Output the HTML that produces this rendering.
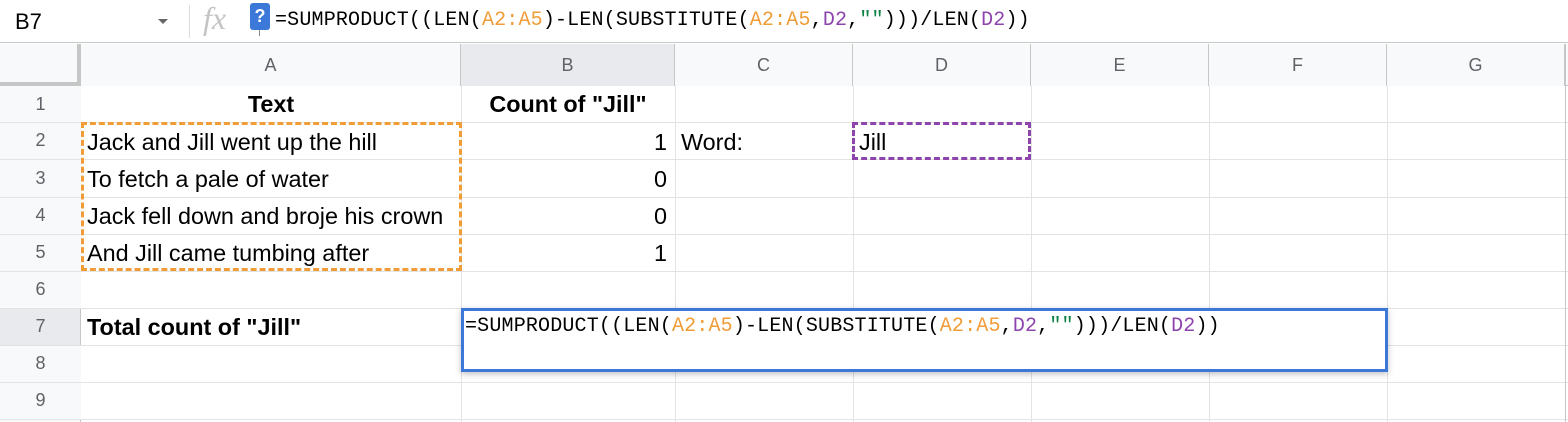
<!DOCTYPE html>
<html><head><meta charset="utf-8"><style>
*{margin:0;padding:0;box-sizing:border-box}
body{width:1568px;height:422px;overflow:hidden;background:#fff;font-family:"Liberation Sans",Arial,sans-serif;position:relative}
.a{position:absolute}
.hl{position:absolute;height:1px;background:#e2e3e3}
.vl{position:absolute;width:1px;background:#e2e3e3}
.ch{position:absolute;top:44px;height:42px;line-height:42px;text-align:center;color:#5f6368;font-size:18px;background:#f8f9fa;border-right:1px solid #c4c7c5}
.rh{position:absolute;left:0;width:81px;text-align:center;color:#5f6368;font-size:18px;background:#f8f9fa}
.c{position:absolute;font-size:23.4px;color:#000;white-space:nowrap}
.mono{font-family:"Liberation Mono",monospace;font-size:20px;letter-spacing:0px;white-space:nowrap;color:#000}
.o{color:#f09c37}.p{color:#8e44ad}.g{color:#0b8043}
</style></head><body>
<div class="a" style="left:0;top:0;width:1568px;height:43px;background:#fff;border-bottom:1px solid #c4c7c5"></div>
<div class="a" style="left:15px;top:9px;font-size:22px;color:#000">B7</div>
<div class="a" style="left:158px;top:19px;width:0;height:0;border-left:5px solid transparent;border-right:5px solid transparent;border-top:5px solid #666"></div>
<div class="a" style="left:189px;top:5px;width:1px;height:33px;background:#dadce0"></div>
<div class="a" style="left:203px;top:0px;font-family:'Liberation Serif',serif;font-style:italic;font-size:32px;color:#c4c4c4">fx</div>
<div class="a" style="left:250px;top:3px;width:20px;height:27px;background:#3c78d8;border-radius:3px;color:#fff;font-weight:bold;font-size:18px;text-align:center;line-height:27px">?</div>
<div class="a" style="left:259px;top:30px;width:1px;height:6px;background:#888"></div>
<div class="a mono" style="left:275px;top:9px;letter-spacing:0.17px">=SUMPRODUCT((LEN(<span class="o">A2:A5</span>)-LEN(SUBSTITUTE(<span class="o">A2:A5</span>,<span class="p">D2</span>,<span class="g">""</span>)))/LEN(<span class="p">D2</span>))</div>
<div class="a" style="left:0;top:44px;width:1568px;height:42px;background:#f8f9fa;border-bottom:1px solid #c4c7c5"></div>
<div class="a" style="left:0;top:44px;width:81px;height:42px;background:#f8f9fa;border-right:4px solid #c4c7c5;border-bottom:4px solid #c4c7c5"></div>
<div class="ch" style="left:81px;width:380px">A</div>
<div class="ch" style="left:461px;width:214px;background:#e8eaed">B</div>
<div class="ch" style="left:675px;width:178px">C</div>
<div class="ch" style="left:853px;width:178px">D</div>
<div class="ch" style="left:1031px;width:178px">E</div>
<div class="ch" style="left:1209px;width:178px">F</div>
<div class="ch" style="left:1387px;width:178px">G</div>
<div class="a" style="left:0;top:86px;width:81px;height:336px;background:#f8f9fa;border-right:1px solid #c4c7c5"></div>
<div class="a" style="left:0;top:308px;width:80px;height:37px;background:#e8eaed"></div>
<div class="rh" style="top:86px;height:36px;line-height:36px">1</div>
<div class="rh" style="top:122px;height:37px;line-height:37px">2</div>
<div class="rh" style="top:159px;height:38px;line-height:38px">3</div>
<div class="rh" style="top:197px;height:37px;line-height:37px">4</div>
<div class="rh" style="top:234px;height:37px;line-height:37px">5</div>
<div class="rh" style="top:271px;height:37px;line-height:37px">6</div>
<div class="rh" style="top:308px;height:37px;line-height:37px;background:transparent">7</div>
<div class="rh" style="top:345px;height:37px;line-height:37px">8</div>
<div class="rh" style="top:382px;height:37px;line-height:37px">9</div>
<div class="hl" style="left:0;width:1568px;top:122px"></div>
<div class="hl" style="left:0;width:1568px;top:159px"></div>
<div class="hl" style="left:0;width:1568px;top:197px"></div>
<div class="hl" style="left:0;width:1568px;top:234px"></div>
<div class="hl" style="left:0;width:1568px;top:271px"></div>
<div class="hl" style="left:0;width:1568px;top:308px"></div>
<div class="hl" style="left:0;width:1568px;top:345px"></div>
<div class="hl" style="left:0;width:1568px;top:382px"></div>
<div class="hl" style="left:0;width:1568px;top:419px"></div>
<div class="vl" style="left:461px;top:86px;height:336px"></div>
<div class="vl" style="left:675px;top:86px;height:336px"></div>
<div class="vl" style="left:853px;top:86px;height:336px"></div>
<div class="vl" style="left:1031px;top:86px;height:336px"></div>
<div class="vl" style="left:1209px;top:86px;height:336px"></div>
<div class="vl" style="left:1387px;top:86px;height:336px"></div>
<div class="vl" style="left:1565px;top:44px;height:378px;background:#c4c7c5"></div>
<div class="c" style="left:81px;width:380px;text-align:center;top:91px;font-weight:bold">Text</div>
<div class="c" style="left:461px;width:214px;text-align:center;top:91px;font-weight:bold">Count of "Jill"</div>
<div class="c" style="left:87px;top:129px">Jack and Jill went up the hill</div>
<div class="c" style="left:87px;top:166px">To fetch a pale of water</div>
<div class="c" style="left:87px;top:203px">Jack fell down and broje his crown</div>
<div class="c" style="left:87px;top:240px">And Jill came tumbing after</div>
<div class="c" style="left:461px;width:206px;text-align:right;top:129px">1</div>
<div class="c" style="left:461px;width:206px;text-align:right;top:166px">0</div>
<div class="c" style="left:461px;width:206px;text-align:right;top:203px">0</div>
<div class="c" style="left:461px;width:206px;text-align:right;top:240px">1</div>
<div class="c" style="left:681px;top:129px">Word:</div>
<div class="c" style="left:859px;top:129px">Jill</div>
<div class="c" style="left:87px;top:314px;font-weight:bold">Total count of "Jill"</div>
<div class="a" style="left:81px;top:122px;width:381px;height:149px;border:3px dashed #f09c37"></div>
<div class="a" style="left:852px;top:122px;width:179px;height:38px;border:3px dashed #8e44ad"></div>
<div class="a" style="left:461px;top:308px;width:927px;height:64px;background:#fff;border:3px solid #3c78d8;box-shadow:0 2px 6px rgba(0,0,0,.25)"></div>
<div class="a mono" style="left:465px;top:315px;letter-spacing:0.17px">=SUMPRODUCT((LEN(<span class="o">A2:A5</span>)-LEN(SUBSTITUTE(<span class="o">A2:A5</span>,<span class="p">D2</span>,<span class="g">""</span>)))/LEN(<span class="p">D2</span>))</div>
</body></html>
